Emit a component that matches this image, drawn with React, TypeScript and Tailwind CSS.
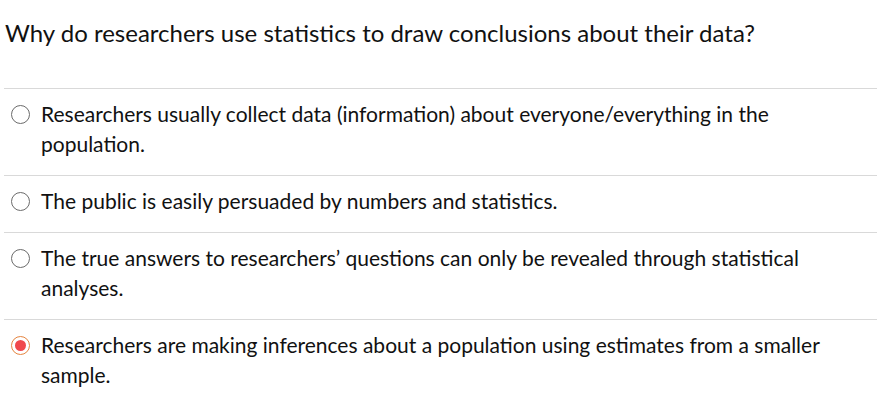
const options = [
  {
    text: "Researchers usually collect data (information) about everyone/everything in the population.",
    selected: false,
  },
  { text: "The public is easily persuaded by numbers and statistics.", selected: false },
  {
    text: "The true answers to researchers\u2019 questions can only be revealed through statistical analyses.",
    selected: false,
  },
  {
    text: "Researchers are making inferences about a population using estimates from a smaller sample.",
    selected: true,
  },
];

const Radio = ({ selected }: { selected: boolean }) =>
  selected ? (
    <span className="mt-[6px] flex h-[19px] w-[19px] shrink-0 items-center justify-center rounded-full border-[1.5px] border-[#e5843f] bg-white">
      <span className="h-[11px] w-[11px] rounded-full bg-[#f0484c]"></span>
    </span>
  ) : (
    <span className="mt-[6px] h-[19px] w-[19px] shrink-0 rounded-full border border-[#6b6b6b] bg-white"></span>
  );

export default function App() {
  return (
    <div className="min-h-[416px] w-[877px] bg-white pl-1 text-[#111] font-['Lato','Liberation_Sans',sans-serif]">
      <h1 className="pt-[17px] pb-[39px] pl-px text-[24px] leading-[32px] font-normal">
        Why do researchers use statistics to draw conclusions about their data?
      </h1>
      <ul className="w-full">
        {options.map((o, i) => (
          <li
            key={i}
            className="flex items-start gap-[11px] border-t border-[#d9d9d9] pt-[10px] pb-[16px] pl-[7px] pr-[27px]"
          >
            <Radio selected={o.selected} />
            <span className="text-[21px] leading-[30px]">{o.text}</span>
          </li>
        ))}
      </ul>
    </div>
  );
}
